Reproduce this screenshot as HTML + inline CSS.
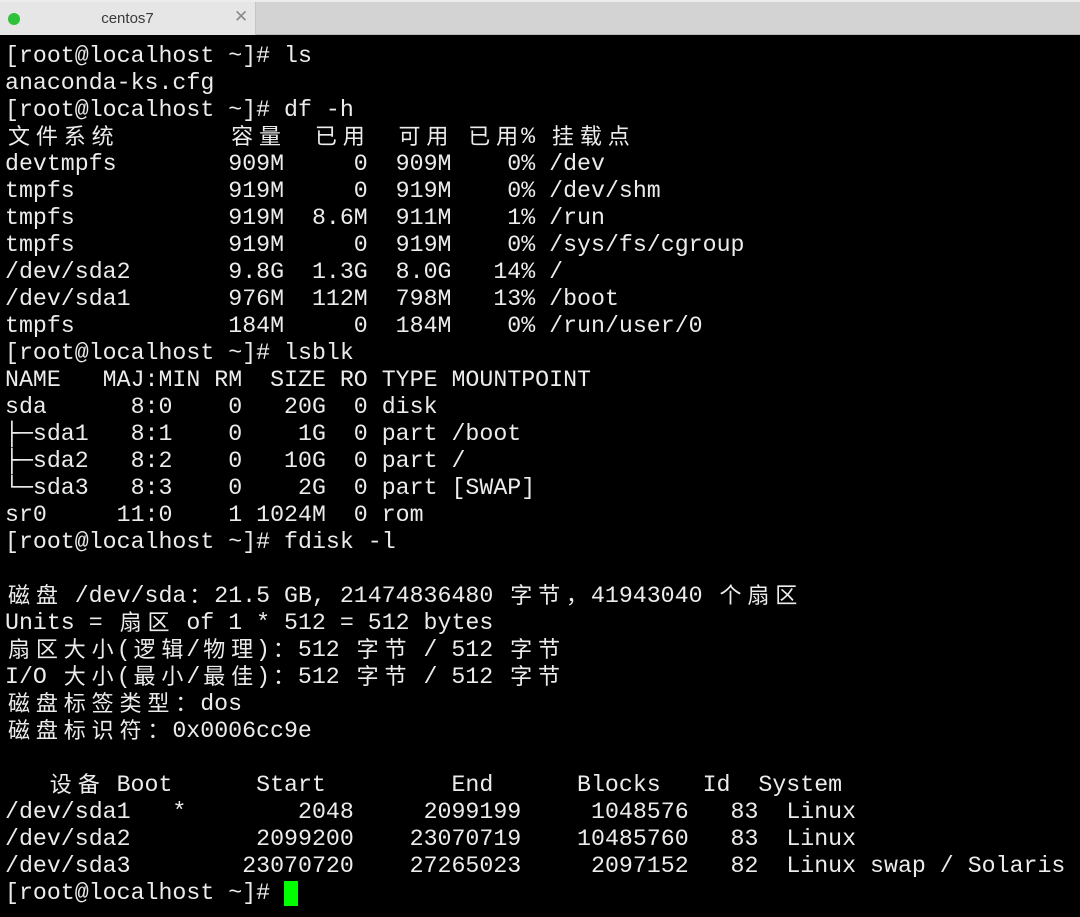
<!DOCTYPE html>
<html><head><meta charset="utf-8">
<style>
html,body{margin:0;padding:0;background:#000;}
body{width:1080px;height:917px;overflow:hidden;position:relative;}
.bar{position:absolute;left:0;top:0;width:1080px;height:35px;background:#d3d3d3;border-top:2px solid #ececec;box-sizing:border-box;border-bottom:1px solid #b8b8b8;}
.tab{position:absolute;left:0;top:0;width:255px;height:33px;background:#e6e6e6;border-right:1px solid #c4c4c4;}
.dot{position:absolute;left:8px;top:11px;width:12px;height:12px;border-radius:50%;background:#2dc23a;}
.title{position:absolute;left:0;width:255px;top:8px;text-align:center;font:15px "Liberation Sans",sans-serif;color:#3a3a3a;}
.x{position:absolute;left:234px;top:5px;font:17px "Liberation Sans",sans-serif;color:#8a8a8a;}
pre{position:absolute;left:5px;top:43px;margin:0;font-family:"Liberation Mono","DejaVu Sans Mono",monospace;font-size:23.25px;line-height:27px;color:#ececec;}
.c{display:inline-block;width:27.9px;height:27px;overflow:visible;text-align:center;font-family:"Noto Sans CJK SC",sans-serif;font-size:22px;line-height:27px;vertical-align:top;position:relative;top:-2px;}
.cur{display:inline-block;width:14px;height:25px;background:#00ff00;vertical-align:top;margin-top:1px;}
</style></head><body>
<div class="bar"><div class="tab"><div class="dot"></div><div class="title">centos7</div><div class="x">✕</div></div></div>
<pre id="t">[root@localhost ~]# ls
anaconda-ks.cfg
[root@localhost ~]# df -h
文件系统        容量  已用  可用 已用% 挂载点
devtmpfs        909M     0  909M    0% /dev
tmpfs           919M     0  919M    0% /dev/shm
tmpfs           919M  8.6M  911M    1% /run
tmpfs           919M     0  919M    0% /sys/fs/cgroup
/dev/sda2       9.8G  1.3G  8.0G   14% /
/dev/sda1       976M  112M  798M   13% /boot
tmpfs           184M     0  184M    0% /run/user/0
[root@localhost ~]# lsblk
NAME   MAJ:MIN RM  SIZE RO TYPE MOUNTPOINT
sda      8:0    0   20G  0 disk
├─sda1   8:1    0    1G  0 part /boot
├─sda2   8:2    0   10G  0 part /
└─sda3   8:3    0    2G  0 part [SWAP]
sr0     11:0    1 1024M  0 rom
[root@localhost ~]# fdisk -l

磁盘 /dev/sda：21.5 GB, 21474836480 字节，41943040 个扇区
Units = 扇区 of 1 * 512 = 512 bytes
扇区大小(逻辑/物理)：512 字节 / 512 字节
I/O 大小(最小/最佳)：512 字节 / 512 字节
磁盘标签类型：dos
磁盘标识符：0x0006cc9e

   设备 Boot      Start         End      Blocks   Id  System
/dev/sda1   *        2048     2099199     1048576   83  Linux
/dev/sda2         2099200    23070719    10485760   83  Linux
/dev/sda3        23070720    27265023     2097152   82  Linux swap / Solaris
[root@localhost ~]# <span class="cur"></span></pre>
<script>
(function(){
var p=document.getElementById('t');
var w=document.createTreeWalker(p,NodeFilter.SHOW_TEXT,null,false);var ns=[];while(w.nextNode())ns.push(w.currentNode);
ns.forEach(function(n){
 var s=n.nodeValue;if(!/[\u2e80-\uffef]/.test(s))return;
 var f=document.createDocumentFragment();var buf='';
 for(var i=0;i<s.length;i++){var ch=s[i];
  if(/[\u2e80-\u9fff\uff00-\uffef\u3000-\u303f]/.test(ch)){if(buf){f.appendChild(document.createTextNode(buf));buf='';}
   var sp=document.createElement('span');sp.className='c';sp.textContent=ch;f.appendChild(sp);}
  else buf+=ch;}
 if(buf)f.appendChild(document.createTextNode(buf));
 n.parentNode.replaceChild(f,n);
});
})();
</script>
</body></html>
